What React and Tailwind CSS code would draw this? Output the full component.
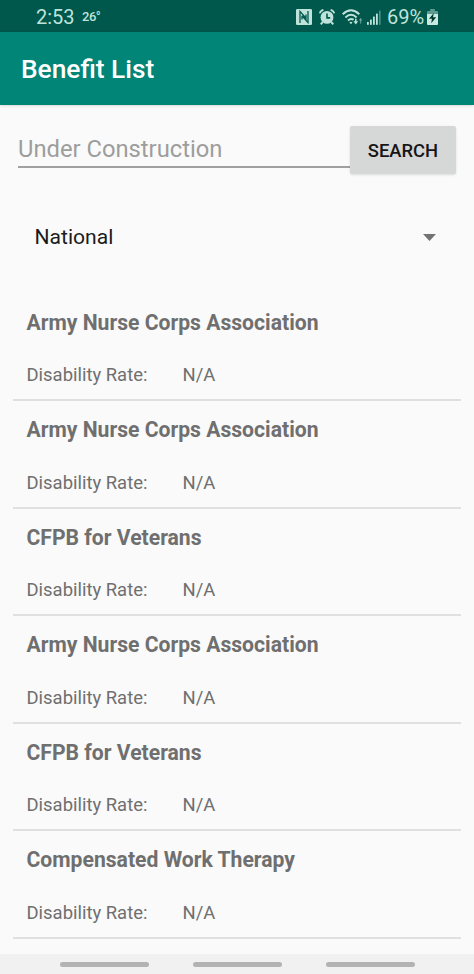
import React from 'react';

const benefits = [
  { name: 'Army Nurse Corps Association', rate: 'N/A' },
  { name: 'Army Nurse Corps Association', rate: 'N/A' },
  { name: 'CFPB for Veterans', rate: 'N/A' },
  { name: 'Army Nurse Corps Association', rate: 'N/A' },
  { name: 'CFPB for Veterans', rate: 'N/A' },
  { name: 'Compensated Work Therapy', rate: 'N/A' },
];

const NfcIcon = () => (
  <svg className="w-4 h-4" viewBox="0 0 16 16">
    <rect width="16" height="16" rx="1.2" fill="#bfe3da" />
    <path
      d="M4 14V2.4L10 9.2V5.4M6 6.8V10.6M6 6.8L12 13.6V2"
      fill="none"
      stroke="#00574b"
      strokeWidth="1.3"
    />
  </svg>
);

const AlarmIcon = () => (
  <svg className="w-4 h-4" viewBox="0 0 16 16" fill="none" stroke="#bfe3da">
    <circle cx="8" cy="8.4" r="6.4" fill="#bfe3da" stroke="none" />
    <path d="M.8 4.4Q1.4 1.6 4.4 .9M15.2 4.4Q14.6 1.6 11.6 .9" strokeWidth="1.7" />
    <path d="M3.8 12.8L1.8 15.4M12.2 12.8L14.2 15.4" strokeWidth="2" />
    <path d="M8 4.6V8.9H11.2" stroke="#00574b" strokeWidth="1.6" />
  </svg>
);

const WifiIcon = () => (
  <svg className="w-[21px] h-4" viewBox="0 0 21 16" fill="none" stroke="#bfe3da">
    <path d="M.7 5.2Q9 -2.6 17.3 5.2M3.4 8.5Q9 3.2 14.6 8.5M6 11.5Q9 8.7 11.6 10.8" strokeWidth="1.9" />
    <path d="M7.4 13.4Q9 12 10.4 13.4L9 15.2Z" fill="#bfe3da" stroke="none" />
    <path d="M13.8 9.8V13" strokeWidth="1.5" />
    <path d="M11.4 12.2H16.2L13.8 15.6Z" fill="#bfe3da" stroke="none" />
    <path d="M18.6 10.4V14.6" strokeWidth="1.3" opacity=".45" />
    <path d="M16.8 11.4H20.4L18.6 8.6Z" fill="#bfe3da" stroke="none" opacity=".45" />
  </svg>
);

const SignalIcon = () => (
  <svg className="w-3.5 h-4" viewBox="0 0 14 16" fill="#bfe3da">
    <rect x="0" y="13" width="1.8" height="2.8" />
    <rect x="3" y="10.6" width="1.8" height="5.2" />
    <rect x="6" y="7.6" width="1.8" height="8.2" />
    <rect x="9" y="4.6" width="1.8" height="11.2" />
    <rect x="12" y="1.6" width="1.6" height="14.2" opacity=".4" />
  </svg>
);

const BatteryIcon = () => (
  <svg className="w-[11px] h-4" viewBox="0 0 11 16">
    <path d="M3.2 0H7.8V2H10Q11 2 11 3V6H0V3Q0 2 1 2H3.2Z" fill="#5d9a8f" />
    <path d="M0 5H11V15Q11 16 10 16H1Q0 16 0 15Z" fill="#c9e9e1" />
    <path d="M6.8 4L2 9.8H5L4.2 14.2L9.2 8.2H6Z" fill="#00382f" />
  </svg>
);

const StatusBar = () => (
  <div className="h-[31.5px] shrink-0 bg-[#00574b] text-[#bfe3da] flex items-center pl-9 pr-9 pt-[2px]">
    <span className="text-[20px] leading-none w-[46px]">2:53</span>
    <span className="text-[13px] leading-none font-medium tracking-[-0.5px]">26°</span>
    <div className="ml-auto flex items-center">
      <NfcIcon />
      <div className="ml-[7px]"><AlarmIcon /></div>
      <div className="ml-[7px]"><WifiIcon /></div>
      <div className="ml-[4px]"><SignalIcon /></div>
      <span className="ml-[6px] w-[40px] text-[20px] leading-none">69%</span>
      <BatteryIcon />
    </div>
  </div>
);

const BenefitRow = ({ name, rate }) => (
  <li className="h-[107.5px] pt-[15px] flex flex-col text-[#6f6f6f]">
    <h2 className="pl-[13.5px] text-[21.15px] leading-[28px] font-bold">{name}</h2>
    <div className="flex pl-[13.5px] mt-[26.5px] text-[18.45px] leading-6">
      <span className="w-[156px]">Disability Rate:</span>
      <span>{rate}</span>
    </div>
    <div className="mt-auto h-0.5 bg-[#e0e0e0]" />
  </li>
);

const App = () => {
  return (
    <div className="w-[474px] h-[974px] overflow-hidden flex flex-col bg-[#fafafa] font-['Roboto',sans-serif]">
      <StatusBar />

      {/* App bar */}
      <header className="h-[73.5px] shrink-0 bg-[#008577] flex items-center px-[21px] pt-[2px] shadow-sm">
        <h1 className="text-[26.3px] font-medium text-white">Benefit List</h1>
      </header>

      {/* Search */}
      <div className="flex items-start mt-[21px] pl-[18px] pr-[18px]">
        <input
          type="text"
          placeholder="Under Construction"
          className="flex-1 min-w-0 h-[42px] pt-[6px] border-b-2 border-[#a0a0a0] text-[23.75px] placeholder:text-[#9d9d9d] outline-none"
        />
        <button className="w-[106px] h-12 pt-[2px] rounded-[2px] bg-[#d6d7d7] text-[18.4px] font-medium text-[#161616] shadow-sm">
          SEARCH
        </button>
      </div>

      {/* Region dropdown */}
      <div className="flex items-center justify-between h-8 mt-[47px] pl-[34.5px] pr-[38px]">
        <span className="text-[21.1px] leading-8 text-[#1c1c1c]">National</span>
        <svg className="w-[13px] h-[7px]" viewBox="0 0 13 7" fill="#737373">
          <path d="M0 0H13L6.5 7Z" />
        </svg>
      </div>

      {/* Benefits */}
      <ul className="mt-[40.6px] mx-[13px] flex-1">
        {benefits.map((benefit, i) => (
          <BenefitRow key={i} name={benefit.name} rate={benefit.rate} />
        ))}
      </ul>

      {/* Navigation bar */}
      <nav className="h-5 shrink-0 bg-[#f1f1f1] flex justify-center gap-11 pt-[8px]">
        <span className="w-[89px] h-[4.5px] rounded-full bg-[#b3b3b3]" />
        <span className="w-[89px] h-[4.5px] rounded-full bg-[#b3b3b3]" />
        <span className="w-[89px] h-[4.5px] rounded-full bg-[#b3b3b3]" />
      </nav>
    </div>
  );
};

export default App;
